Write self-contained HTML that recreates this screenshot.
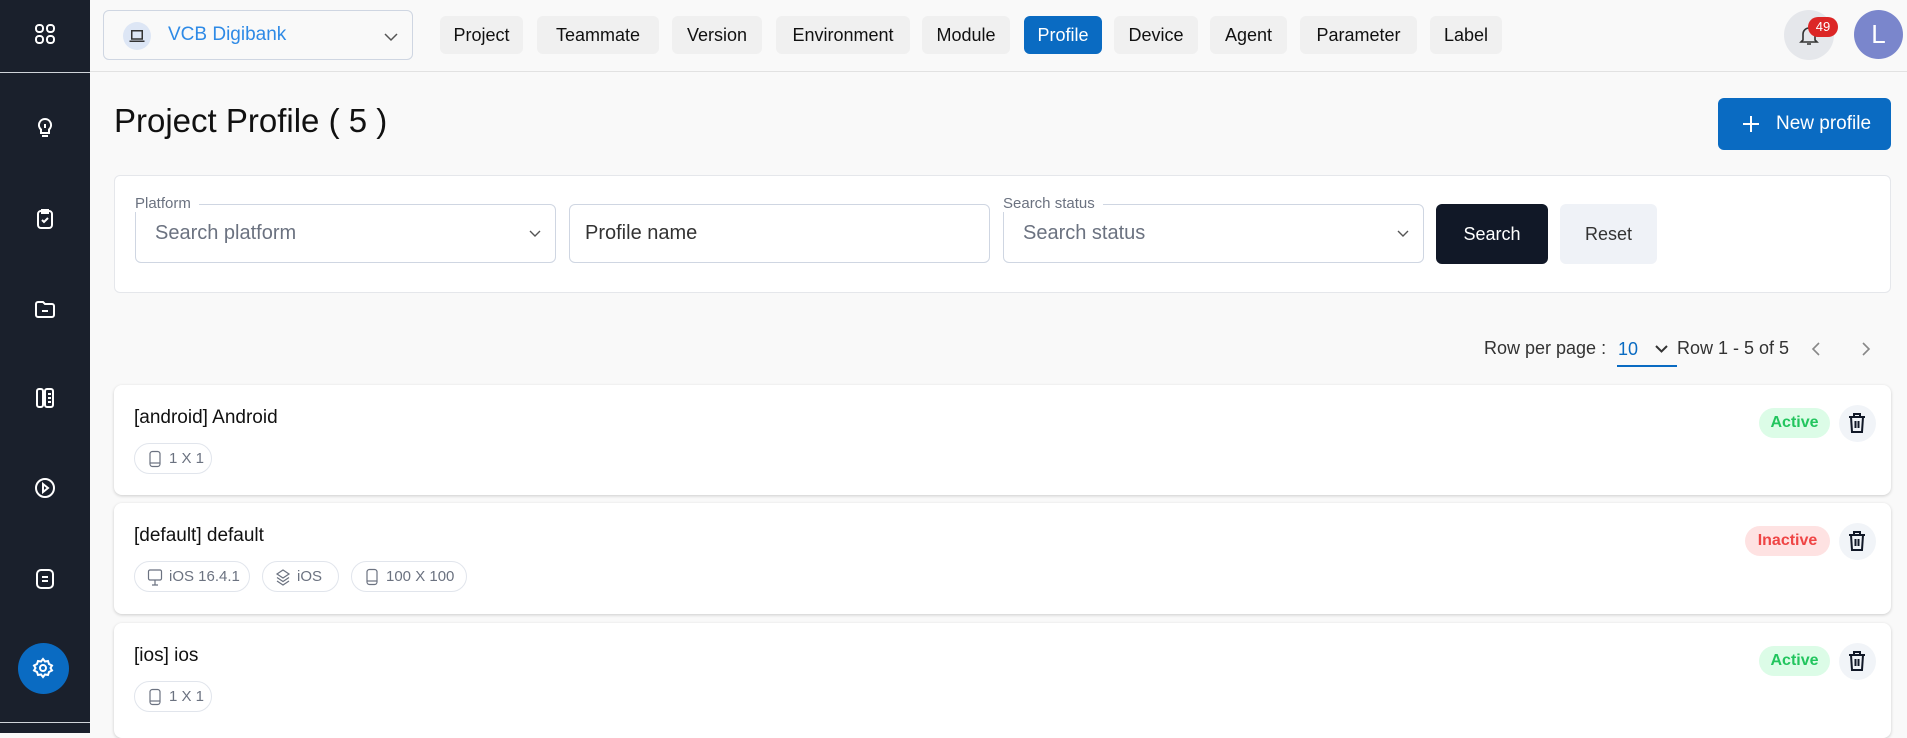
<!DOCTYPE html>
<html><head><meta charset="utf-8"><style>
*{box-sizing:border-box;margin:0;padding:0}
body{width:1907px;height:733px;overflow:hidden;background:#f9f9f9;font-family:"Liberation Sans",sans-serif;color:#111827;position:relative}
.abs{position:absolute}
.side{left:0;top:0;width:90px;height:733px;background:#1a202c}
.side .ic{position:absolute;left:33px;width:24px;height:24px}
.top{left:90px;top:0;right:0;height:72px;border-bottom:1px solid #e2e2e2;background:#f9f9f9}
.tab{position:absolute;top:16px;height:38px;background:#f0f0f0;border-radius:6px;font-size:18px;line-height:38px;text-align:center;color:#111}
.tab.on{background:#0a6bc2;color:#fff}
.card{background:#fff;border:1px solid #e5e7eb;border-radius:6px}
.inp{position:absolute;top:204px;height:59px;border:1px solid #cfd6e2;border-radius:6px;background:#fff;font-size:20px;line-height:57px;padding-left:19px;color:#6b7280}
.lbl{position:absolute;top:195px;font-size:15px;color:#6b7280;background:#fff;padding-right:8px}
.chev{position:absolute;right:14px;top:22px;width:12px;height:12px}
.pc{position:absolute;left:114px;width:1777px;background:#fff;border-radius:8px;box-shadow:0 1px 3px rgba(0,0,0,.18)}
.pt{position:absolute;left:20px;top:22px;font-size:19px;color:#111}
.chip{position:absolute;top:58px;height:31px;border:1px solid #e1e5ec;border-radius:16px;font-size:15px;line-height:29px;color:#6b7280;padding:0 0 0 34px;white-space:nowrap}
.chip svg{position:absolute;left:12px;top:6px}
.pill{position:absolute;top:23px;height:30px;border-radius:15px;font-size:16px;font-weight:bold;line-height:30px;text-align:center}
.act{background:#dcfce7;color:#22c55e;width:71px;right:61px}
.ina{background:#fee2e2;color:#ef4444;width:85px;right:61px}
.trash{position:absolute;right:15px;top:20px;width:37px;height:37px;border-radius:50%;background:#f1f4f8}
.trash svg{position:absolute;left:8px;top:7px}
</style></head><body>
<div class="abs side">
 <svg class="ic" style="top:22px" viewBox="0 0 24 24" fill="none" stroke="#fff" stroke-width="2"><rect x="3" y="3" width="7" height="7" rx="3"/><rect x="14" y="3" width="7" height="7" rx="3"/><rect x="3" y="14" width="7" height="7" rx="3"/><rect x="14" y="14" width="7" height="7" rx="3"/></svg>
 <div class="abs" style="left:0;top:72px;width:90px;height:1px;background:#d0d4da"></div>
 <svg class="ic" style="top:116px" viewBox="0 0 24 24" fill="none" stroke="#fff" stroke-width="2"><path d="M12 3a6 6 0 0 0-4 10.5V17h8v-3.5A6 6 0 0 0 12 3zM9 20h6M12 8v4"/></svg>
 <svg class="ic" style="top:207px" viewBox="0 0 24 24" fill="none" stroke="#fff" stroke-width="2"><rect x="5" y="4" width="14" height="17" rx="3"/><path d="M9 3h6v3H9zM9 13l2 2 4-4"/></svg>
 <svg class="ic" style="top:297px" viewBox="0 0 24 24" fill="none" stroke="#fff" stroke-width="2"><path d="M3 7a2 2 0 0 1 2-2h5l2 2h7a2 2 0 0 1 2 2v9a2 2 0 0 1-2 2H5a2 2 0 0 1-2-2zM9 14h6"/></svg>
 <svg class="ic" style="top:386px" viewBox="0 0 24 24" fill="none" stroke="#fff" stroke-width="2"><rect x="4" y="3" width="6" height="18" rx="2"/><rect x="12" y="3" width="8" height="18" rx="2"/><path d="M15 8h3M15 12h3M15 16h3"/></svg>
 <svg class="ic" style="top:476px" viewBox="0 0 24 24" fill="none" stroke="#fff" stroke-width="2"><circle cx="12" cy="12" r="9"/><path d="M10 8l5 4-5 4z"/></svg>
 <svg class="ic" style="top:567px" viewBox="0 0 24 24" fill="none" stroke="#fff" stroke-width="2"><rect x="4" y="3" width="16" height="18" rx="4"/><path d="M9 10h6M9 14h6"/></svg>
 <div class="abs" style="left:18px;top:643px;width:51px;height:51px;border-radius:50%;background:#0a6bc2"></div>
 <svg class="ic" style="top:656px;left:31px" viewBox="0 0 24 24" fill="none" stroke="#fff" stroke-width="2"><circle cx="12" cy="12" r="3"/><path d="M12 3l2 2.5 3-.5 1 3 3 1.5-1.5 2.5 1.5 2.5-3 1.5-1 3-3-.5-2 2.5-2-2.5-3 .5-1-3-3-1.5L4.5 12 3 9.5 6 8l1-3 3 .5z"/></svg>
 <div class="abs" style="left:0;top:722px;width:90px;height:1px;background:#d0d4da"></div>
</div>
<div class="abs top"></div>
<div class="abs" style="left:103px;top:10px;width:310px;height:50px;border:1px solid #cfd6e2;border-radius:6px;background:#f9f9f9">
 <div class="abs" style="left:19px;top:11px;width:28px;height:28px;border-radius:50%;background:#dde6f5"></div>
 <svg class="abs" style="left:24px;top:16px" width="18" height="18" viewBox="0 0 24 24" fill="none" stroke="#333" stroke-width="2"><rect x="5" y="5" width="14" height="11"/><path d="M2 19h20"/></svg>
 <div class="abs" style="left:64px;top:13px;font-size:19px;color:#2e8ae6">VCB Digibank</div>
 <svg class="abs" style="left:280px;top:20px" width="14" height="12" viewBox="0 0 14 12" fill="none" stroke="#555" stroke-width="1.5"><path d="M1 3l6 6 6-6"/></svg>
</div>
<div class="tab" style="left:440px;width:83px">Project</div>
<div class="tab" style="left:537px;width:122px">Teammate</div>
<div class="tab" style="left:672px;width:90px">Version</div>
<div class="tab" style="left:776px;width:134px">Environment</div>
<div class="tab" style="left:922px;width:88px">Module</div>
<div class="tab on" style="left:1024px;width:78px">Profile</div>
<div class="tab" style="left:1114px;width:84px">Device</div>
<div class="tab" style="left:1210px;width:77px">Agent</div>
<div class="tab" style="left:1300px;width:117px">Parameter</div>
<div class="tab" style="left:1430px;width:72px">Label</div>
<div class="abs" style="left:1784px;top:10px;width:50px;height:50px;border-radius:50%;background:#e5e7eb"></div>
<svg class="abs" style="left:1797px;top:23px" width="24" height="24" viewBox="0 0 24 24" fill="none" stroke="#333" stroke-width="1.6"><path d="M6 17V11a6 6 0 0 1 12 0v6l2 2H4zM10 21h4"/></svg>
<div class="abs" style="left:1808px;top:17px;width:30px;height:20px;border-radius:10px;background:#dc2626;color:#fff;font-size:13px;line-height:20px;text-align:center">49</div>
<div class="abs" style="left:1854px;top:10px;width:49px;height:49px;border-radius:50%;background:#7a86cc;color:#fff;font-size:26px;line-height:49px;text-align:center">L</div>

<div class="abs" style="left:114px;top:102px;font-size:33px;color:#111">Project Profile ( 5 )</div>
<div class="abs" style="left:1718px;top:98px;width:173px;height:52px;border-radius:6px;background:#0a6bc2;color:#fff;font-size:19px;line-height:52px;padding-left:58px;white-space:nowrap">New profile</div>
<svg class="abs" style="left:1742px;top:115px" width="18" height="18" viewBox="0 0 18 18" stroke="#fff" stroke-width="2"><path d="M9 1v16M1 9h16"/></svg>

<div class="abs card" style="left:114px;top:175px;width:1777px;height:118px"></div>
<div class="inp" style="left:135px;width:421px">Search platform<svg class="chev" viewBox="0 0 12 12" fill="none" stroke="#555" stroke-width="1.4"><path d="M1 4l5 5 5-5"/></svg></div>
<div class="lbl" style="left:135px">Platform</div>
<div class="inp" style="left:569px;width:421px;color:#333;padding-left:15px">Profile name</div>
<div class="inp" style="left:1003px;width:421px">Search status<svg class="chev" viewBox="0 0 12 12" fill="none" stroke="#555" stroke-width="1.4"><path d="M1 4l5 5 5-5"/></svg></div>
<div class="lbl" style="left:1003px">Search status</div>
<div class="abs" style="left:1436px;top:204px;width:112px;height:60px;border-radius:6px;background:#111827;color:#fff;font-size:18px;line-height:60px;text-align:center">Search</div>
<div class="abs" style="left:1560px;top:204px;width:97px;height:60px;border-radius:6px;background:#eff2f7;color:#333;font-size:18px;line-height:60px;text-align:center">Reset</div>

<div class="abs" style="left:1484px;top:338px;font-size:18px;color:#333">Row per page :</div>
<div class="abs" style="left:1618px;top:339px;font-size:18px;color:#0a6bc2">10</div>
<svg class="abs" style="left:1654px;top:343px" width="15" height="12" viewBox="0 0 15 12" fill="none" stroke="#333" stroke-width="2"><path d="M2 3l5.5 5.5L13 3"/></svg>
<div class="abs" style="left:1617px;top:365px;width:60px;height:2px;background:#0a6bc2"></div>
<div class="abs" style="left:1677px;top:338px;font-size:18px;color:#333">Row 1 - 5 of 5</div>
<svg class="abs" style="left:1810px;top:341px" width="12" height="16" viewBox="0 0 12 16" fill="none" stroke="#888" stroke-width="1.6"><path d="M9 2L3 8l6 6"/></svg>
<svg class="abs" style="left:1860px;top:341px" width="12" height="16" viewBox="0 0 12 16" fill="none" stroke="#888" stroke-width="1.6"><path d="M3 2l6 6-6 6"/></svg>

<svg width="0" height="0" style="position:absolute"><defs>
<symbol id="tab" viewBox="0 0 16 18"><rect x="3" y="1.5" width="10" height="15" rx="2.5" fill="none" stroke="#6b7280" stroke-width="1.2"/><path d="M3 13h10" stroke="#6b7280" stroke-width="1.2"/></symbol>
<symbol id="mon" viewBox="0 0 16 18"><rect x="1.5" y="2" width="13" height="10" rx="1.5" fill="none" stroke="#6b7280" stroke-width="1.2"/><path d="M8 12v5M5 17h6" stroke="#6b7280" stroke-width="1.2"/></symbol>
<symbol id="lay" viewBox="0 0 16 18" fill="none" stroke="#6b7280" stroke-width="1.2"><path d="M8 2l6 4-6 4-6-4zM2 9.5l6 4 6-4M2 13l6 4 6-4"/></symbol>
<symbol id="tr" viewBox="0 0 20 22" fill="none" stroke="#111827" stroke-width="2"><path d="M2 5h16M7 5V2h6v3M4 5l1 15h10l1-15M8.5 9v7M11.5 9v7"/></symbol>
</defs></svg>

<div class="pc" style="top:385px;height:110px">
 <div class="pt">[android] Android</div>
 <div class="chip" style="left:20px;width:78px"><svg width="16" height="18"><use href="#tab"/></svg>1 X 1</div>
 <div class="pill act">Active</div>
 <div class="trash"><svg width="20" height="22"><use href="#tr"/></svg></div>
</div>
<div class="pc" style="top:503px;height:111px">
 <div class="pt">[default] default</div>
 <div class="chip" style="left:20px;width:116px"><svg width="16" height="18"><use href="#mon"/></svg>iOS 16.4.1</div>
 <div class="chip" style="left:148px;width:77px"><svg width="16" height="18"><use href="#lay"/></svg>iOS</div>
 <div class="chip" style="left:237px;width:116px"><svg width="16" height="18"><use href="#tab"/></svg>100 X 100</div>
 <div class="pill ina">Inactive</div>
 <div class="trash"><svg width="20" height="22"><use href="#tr"/></svg></div>
</div>
<div class="pc" style="top:623px;height:115px">
 <div class="pt">[ios] ios</div>
 <div class="chip" style="left:20px;width:78px"><svg width="16" height="18"><use href="#tab"/></svg>1 X 1</div>
 <div class="pill act">Active</div>
 <div class="trash"><svg width="20" height="22"><use href="#tr"/></svg></div>
</div>
</body></html>
